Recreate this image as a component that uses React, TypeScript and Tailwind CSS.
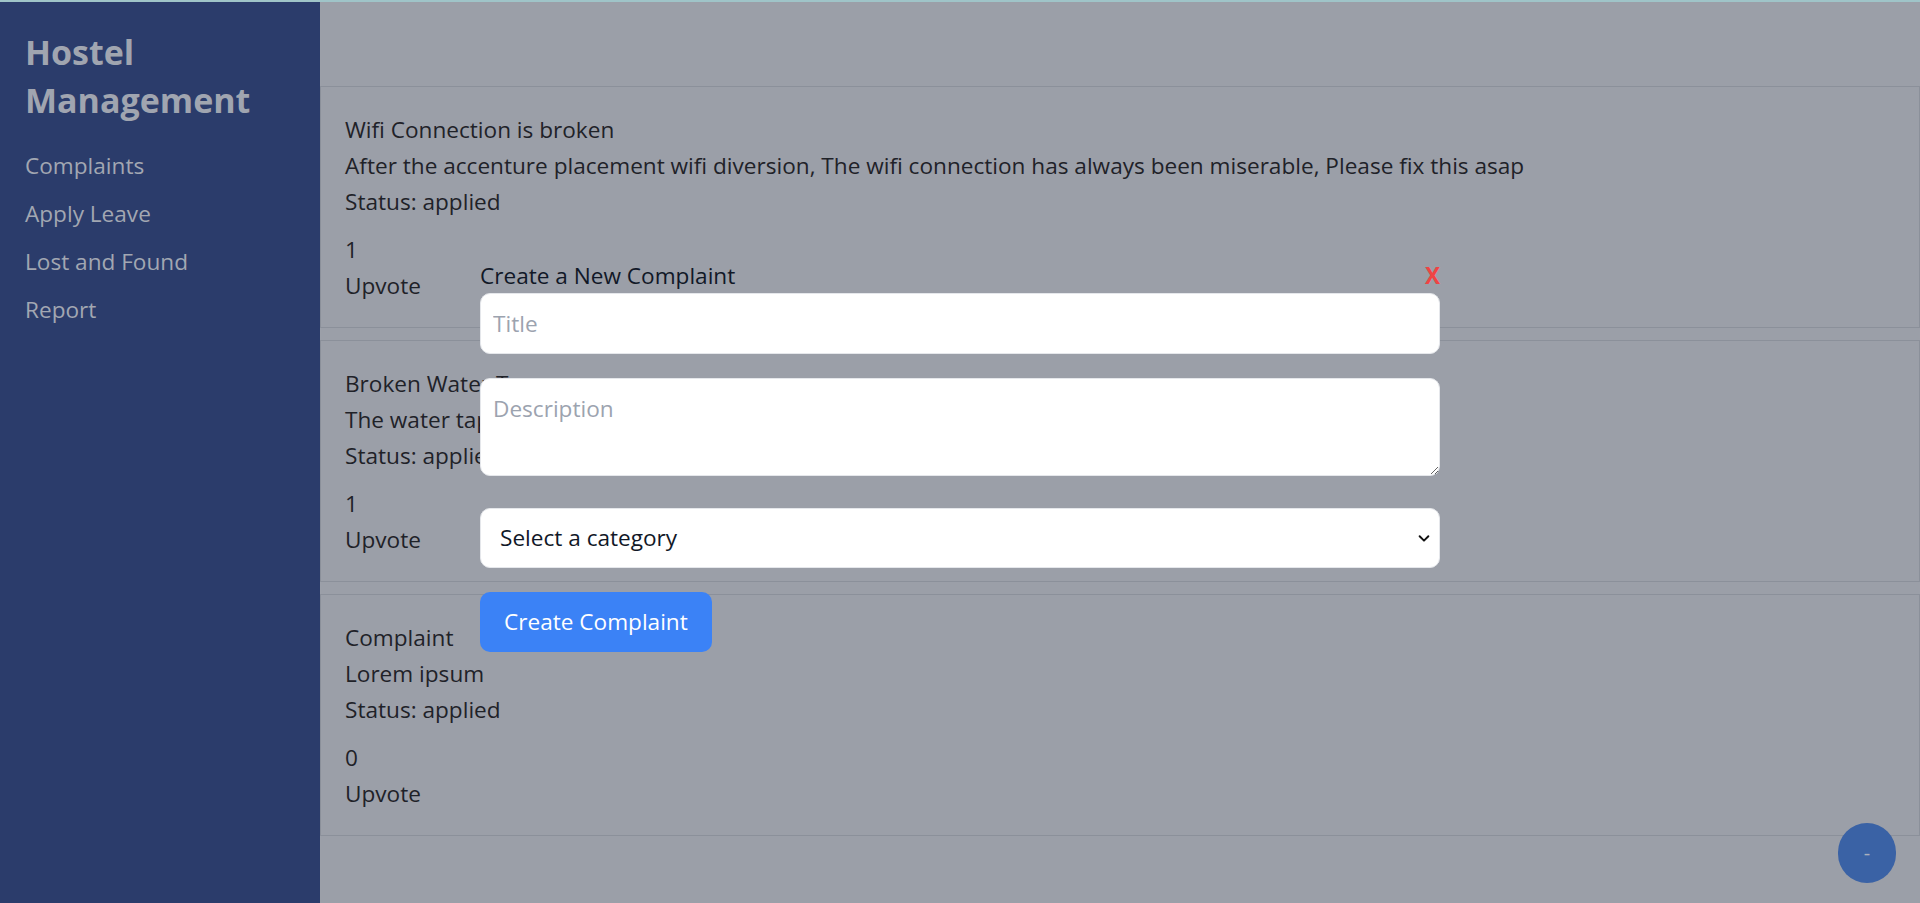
import React from 'react';

type Complaint = {
  id: number;
  title: string;
  description: string;
  status: string;
  upvotes: number;
};

const complaints: Complaint[] = [
  {
    id: 1,
    title: 'Wifi Connection is broken',
    description:
      'After the accenture placement wifi diversion, The wifi connection has always been miserable, Please fix this asap',
    status: 'applied',
    upvotes: 1,
  },
  {
    id: 2,
    title: 'Broken Water Tap',
    description: 'The water tap is leaking',
    status: 'applied',
    upvotes: 1,
  },
  { id: 3, title: 'Complaint', description: 'Lorem ipsum', status: 'applied', upvotes: 0 },
];

const navItems = ['Complaints', 'Apply Leave', 'Lost and Found', 'Report'];

const Sidebar: React.FC = () => (
  <aside className="w-[320px] shrink-0 bg-[#2b3c6b] pt-[26px] px-[25px]">
    <h1 className="text-[34px] leading-[48px] font-bold text-[#a0a5b0] mb-6">
      Hostel
      <br />
      Management
    </h1>
    <ul>
      {navItems.map((item) => (
        <li key={item} className="text-[22.6px] leading-[36px] text-[#a2a7b2] mb-3 cursor-pointer">
          {item}
        </li>
      ))}
    </ul>
  </aside>
);

const ComplaintCard: React.FC<{ complaint: Complaint }> = ({ complaint }) => (
  <div className="border border-[#8b909a] px-6 pt-[25px] pb-[23px] mb-3 text-[22.6px] leading-[36px] text-[#1f2228]">
    <p>{complaint.title}</p>
    <p>{complaint.description}</p>
    <p>Status: {complaint.status}</p>
    <div className="mt-3">
      <p>{complaint.upvotes}</p>
      <button className="leading-[36px]">Upvote</button>
    </div>
  </div>
);

const CreateComplaintModal: React.FC = () => (
  <div className="absolute top-[259px] left-[480px] w-[960px] text-[22.6px] leading-[36px]">
    <div className="flex items-center justify-between h-[34px]">
      <h2 className="text-[#111827]">Create a New Complaint</h2>
      <button className="font-bold text-[#ef4444]">X</button>
    </div>
    <input
      type="text"
      placeholder="Title"
      className="block w-full h-[61px] px-3 bg-white border border-gray-200 rounded-[10px] text-[#111827] placeholder:text-[#9ca3af] outline-none"
    />
    <textarea
      placeholder="Description"
      className="mt-6 block w-full h-[98px] px-3 py-3 bg-white border border-gray-200 rounded-[10px] leading-[36px] text-[#111827] placeholder:text-[#9ca3af] outline-none"
    />
    <div className="relative mt-8">
      <select
        defaultValue=""
        className="appearance-none block w-full h-[60px] px-[19px] bg-white border border-gray-200 rounded-[10px] text-[#111827] outline-none"
      >
        <option value="">Select a category</option>
        <option value="electrical">Electrical</option>
        <option value="plumbing">Plumbing</option>
        <option value="internet">Internet</option>
      </select>
      <svg
        className="pointer-events-none absolute right-[9px] top-1/2 -translate-y-1/2"
        width="14"
        height="14"
        viewBox="0 0 16 16"
        fill="none"
        stroke="#111"
        strokeWidth="2.2"
        strokeLinecap="round"
        strokeLinejoin="round"
      >
        <path d="M3 6l5 5 5-5" />
      </svg>
    </div>
    <button className="mt-6 h-[60px] px-6 bg-[#3b82f6] text-white rounded-[10px]">
      Create Complaint
    </button>
  </div>
);

export default function App() {
  return (
    <div className="relative h-[903px] w-full overflow-hidden flex flex-col bg-[#9b9fa8] font-['Open_Sans','Noto_Sans',sans-serif]">
      <div className="h-[2px] bg-[#9fc4c8]" />
      <div className="flex flex-1">
        <Sidebar />
        <main className="flex-1 pt-[84px]">
          {complaints.map((c) => (
            <ComplaintCard key={c.id} complaint={c} />
          ))}
        </main>
      </div>

      <CreateComplaintModal />

      <button className="absolute right-[24px] bottom-[20px] w-[58px] h-[60px] rounded-full bg-[#3a62a5] text-[#a9b0bd] text-[20px] leading-none">
        -
      </button>
    </div>
  );
}
